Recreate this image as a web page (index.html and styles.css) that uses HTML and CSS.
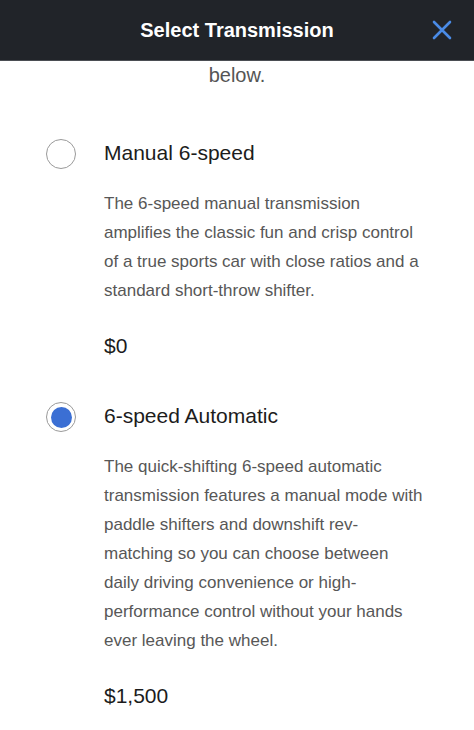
FILE: index.html
```html
<!DOCTYPE html>
<html lang="en">
<head>
  <meta charset="UTF-8">
  <meta name="viewport" content="width=device-width, initial-scale=1.0">
  <title>Select Transmission</title>
  <link rel="stylesheet" href="styles.css">
</head>
<body>
  <header class="modal-header">
    <div></div>
    <h1>Select Transmission</h1>
    <button class="close-button" aria-label="Close">
      <svg width="20" height="20" viewBox="0 0 20 20">
        <path d="M2 2 L18 18 M18 2 L2 18" stroke="#4a8be6" stroke-width="2.6" stroke-linecap="round" fill="none"/>
      </svg>
    </button>
  </header>

  <main class="modal-body">
    <p class="intro">below.</p>

    <div class="option">
      <span class="radio"></span>
      <div class="option-content">
        <h2>Manual 6-speed</h2>
        <p class="description">
          The 6-speed manual transmission amplifies the classic fun and crisp control of a true sports car with close ratios and a standard short-throw shifter.
        </p>
        <div class="price">$0</div>
      </div>
    </div>

    <div class="option selected">
      <span class="radio"></span>
      <div class="option-content">
        <h2>6-speed Automatic</h2>
        <p class="description">
          The quick-shifting 6-speed automatic transmission features a manual mode with paddle shifters and downshift rev-matching so you can choose between daily driving convenience or high-performance control without your hands ever leaving the wheel.
        </p>
        <div class="price">$1,500</div>
      </div>
    </div>
  </main>
</body>
</html>
```

FILE: styles.css
```css
/* Global Styles */
body {
  font-family: "Liberation Sans", Arial, sans-serif;
  margin: 0;
  padding: 0;
  background-color: #fff;
}

/* Header Styles */
.modal-header {
  background-color: #212429;
  border-bottom: 1px solid #4b4e53;
  color: #fff;
  height: 60px;
  display: grid;
  grid-template-columns: 1fr auto 1fr;
  align-items: center;
}

.modal-header h1 {
  margin: 0;
  font-size: 20px;
  font-weight: bold;
}

.close-button {
  justify-self: end;
  margin-right: 22px;
  background: none;
  border: none;
  padding: 0;
  width: 20px;
  height: 20px;
  cursor: pointer;
}

.close-button svg {
  display: block;
}

/* Body Styles */
.modal-body {
  padding: 0 50px 0 46px;
}

.intro {
  margin: 0 0 49px;
  padding-left: 4px;
  text-align: center;
  font-size: 20px;
  line-height: 28px;
  color: #555;
}

.option {
  display: flex;
  gap: 28px;
  margin-bottom: 40px;
}

.radio {
  flex: none;
  box-sizing: border-box;
  width: 30px;
  height: 30px;
  margin-top: 1px;
  border: 1.5px solid #9a9a9a;
  border-radius: 50%;
  display: flex;
  align-items: center;
  justify-content: center;
}

.option.selected .radio::after {
  content: "";
  width: 21px;
  height: 21px;
  border-radius: 50%;
  background-color: #3b6fd4;
}

.option-content h2 {
  margin: 0;
  font-size: 21px;
  font-weight: normal;
  line-height: 30px;
  color: #1c1c1c;
}

.description {
  margin: 21px 0 26px;
  font-size: 17px;
  line-height: 29px;
  color: #575757;
}

.price {
  font-size: 21px;
  line-height: 30px;
  color: #1c1c1c;
}
```
